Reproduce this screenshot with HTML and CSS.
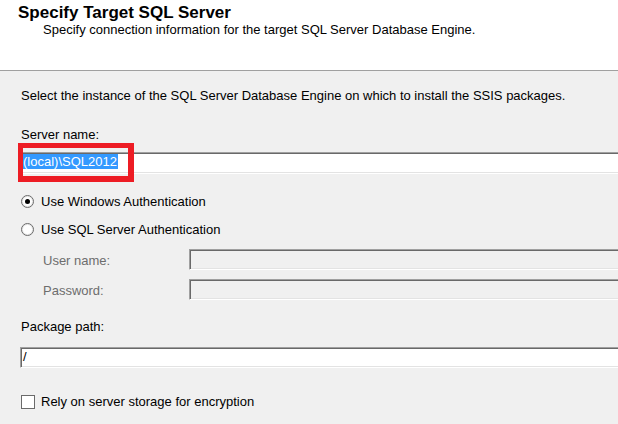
FILE: index.html
```html
<!DOCTYPE html>
<html>
<head>
<meta charset="utf-8">
<link rel="stylesheet" href="styles.css">
</head>
<body>
<div class="page">
  <header class="header">
    <div class="title">Specify Target SQL Server</div>
    <div class="subtitle">Specify connection information for the target SQL Server Database Engine.</div>
  </header>
  <main class="content">
    <div class="intro">Select the instance of the SQL Server Database Engine on which to install the SSIS packages.</div>
    <div class="label server-label">Server name:</div>
    <div class="field-wrap">
      <div class="field server-field"><span class="selected">(local)\SQL2012</span></div>
      <div class="highlight-box"></div>
    </div>
    <div class="option first-option"><span class="radio checked"></span><span>Use Windows Authentication</span></div>
    <div class="option second-option"><span class="radio"></span><span>Use SQL Server Authentication</span></div>
    <div class="cred-row user-row"><span class="cred-label">User name:</span><div class="field disabled"></div></div>
    <div class="cred-row pass-row"><span class="cred-label">Password:</span><div class="field disabled"></div></div>
    <div class="label path-label">Package path:</div>
    <div class="field path-field"><span class="path-text">/</span></div>
    <div class="option check-option"><span class="checkbox"></span><span>Rely on server storage for encryption</span></div>
  </main>
</div>
</body>
</html>
```
FILE: styles.css
```css
html, body {
  margin: 0;
  padding: 0;
  background: #f0f0f0;
  width: 618px;
  height: 424px;
  overflow: hidden;
}
.page {
  font-family: "Liberation Sans", Arial, sans-serif;
  font-size: 13px;
  line-height: 15px;
  color: #000;
  display: flex;
  flex-direction: column;
  height: 424px;
}
.header {
  background: #fff;
  height: 71px;
  box-sizing: border-box;
  border-bottom: 1px solid #a0a0a0;
  padding: 4px 0 0 18px;
}
.title {
  font-weight: bold;
  font-size: 17px;
  line-height: 18px;
}
.subtitle {
  padding-left: 25px;
}
.content {
  display: flex;
  flex-direction: column;
  padding-left: 21px;
}
.intro {
  margin-top: 17px;
}
.server-label {
  margin-top: 24px;
}
.field-wrap {
  position: relative;
  margin-top: 10px;
  margin-left: -1px;
}
.field {
  height: 22px;
  box-sizing: border-box;
  background: #fff;
  border-top: 1px solid #a0a0a0;
  border-left: 1px solid #a0a0a0;
  border-bottom: 1px solid #fff;
  box-shadow: inset 1px 1px 0 #696969, inset 0 -1px 0 #e3e3e3;
  display: flex;
  align-items: flex-start;
  padding: 1px 0 0 2px;
  flex: 1;
}
.selected {
  background: #3399ff;
  color: #fff;
  padding: 0 1px 0 0;
}
.highlight-box {
  position: absolute;
  left: -2px;
  top: -9px;
  width: 116px;
  height: 39px;
  box-sizing: border-box;
  border: 5px solid #ed1c24;
  border-right-width: 6px;
  border-bottom-width: 6px;
}
.option {
  display: flex;
  align-items: center;
  gap: 7px;
}
.first-option {
  margin-top: 20px;
}
.second-option {
  margin-top: 13px;
}
.radio {
  width: 13px;
  height: 13px;
  box-sizing: border-box;
  border-radius: 50%;
  border: 1px solid #6a6a6a;
  background: #fff;
  box-shadow: inset 0 0 0 1px #e6e6e6;
  position: relative;
  flex: none;
}
.radio.checked::after {
  content: "";
  position: absolute;
  left: 3px;
  top: 3px;
  width: 5px;
  height: 5px;
  border-radius: 50%;
  background: #000;
}
.cred-row {
  display: flex;
  align-items: flex-start;
  padding-left: 22px;
}
.user-row {
  margin-top: 12px;
}
.pass-row {
  margin-top: 9px;
}
.cred-label {
  width: 146px;
  margin-top: 4px;
  color: #6d6d6d;
  flex: none;
}
.field.disabled {
  background: #f0f0f0;
  height: 21px;
}
.path-label {
  margin-top: 19px;
}
.path-field {
  margin-top: 13px;
  margin-left: -1px;
  flex: none;
  height: 21px;
}
.check-option {
  margin-top: 26px;
  gap: 6px;
}
.checkbox {
  width: 14px;
  height: 14px;
  box-sizing: border-box;
  border: 1px solid #6a6a6a;
  background: #fff;
  flex: none;
}
```
